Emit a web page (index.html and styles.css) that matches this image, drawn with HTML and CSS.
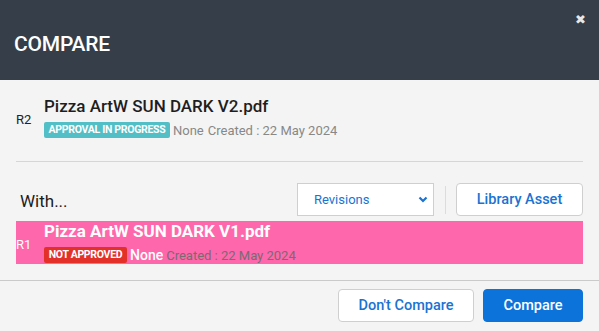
FILE: index.html
```html
<!DOCTYPE html>
<html>
<head>
<meta charset="utf-8">
<link rel="stylesheet" href="styles.css">
</head>
<body>
<div class="modal">
  <header class="modal-header">
    <h1 class="title">COMPARE</h1>
    <span class="close">&#x2716;</span>
  </header>
  <div class="modal-body">
    <div class="item">
      <div class="rev">R2</div>
      <div class="info">
        <div class="name">Pizza ArtW SUN DARK V2.pdf</div>
        <div class="meta">
          <span class="badge teal">APPROVAL IN PROGRESS</span>
          <span class="none">None</span>
          <span class="created">Created : 22 May 2024</span>
        </div>
      </div>
    </div>
    <div class="divider"></div>
    <div class="with-row">
      <div class="with">With...</div>
      <div class="controls">
        <div class="select">
          <span>Revisions</span>
          <svg width="10" height="7" viewBox="0 0 10 7"><path d="M1.5 1.5 L5 5 L8.5 1.5" fill="none" stroke="#1a73d2" stroke-width="2.2"/></svg>
        </div>
        <div class="vsep"></div>
        <button class="btn btn-outline lib">Library Asset</button>
      </div>
    </div>
    <div class="item selected">
      <div class="rev">R1</div>
      <div class="info">
        <div class="name">Pizza ArtW SUN DARK V1.pdf</div>
        <div class="meta">
          <span class="badge red">NOT APPROVED</span>
          <span class="none">None</span>
          <span class="created">Created : 22 May 2024</span>
        </div>
      </div>
    </div>
  </div>
  <footer class="modal-footer">
    <button class="btn btn-outline dont">Don't Compare</button>
    <button class="btn btn-primary cmp">Compare</button>
  </footer>
</div>
</body>
</html>
```
FILE: styles.css
```css
* { box-sizing: border-box; }
html, body { margin: 0; padding: 0; }
body {
  background: #f4f4f4;
  font-family: Roboto, "Liberation Sans", sans-serif;
  color: #1c1c1c;
  width: 599px;
  height: 331px;
  overflow: hidden;
}
.modal { display: flex; flex-direction: column; height: 331px; }
.modal-header {
  position: relative;
  height: 80px;
  background: #353e49;
  display: flex;
  align-items: center;
  padding-left: 14px;
}
.title {
  margin: 0;
  color: #fff;
  font-size: 21px;
  font-weight: 500;
  letter-spacing: -0.2px;
  margin-top: 7px;
}
.close {
  position: absolute;
  right: 13px;
  top: 12px;
  color: #e8e8e8;
  font-size: 13px;
  font-family: "DejaVu Sans", sans-serif;
  font-weight: bold;
}
.modal-body { padding: 0 16px; }
.item { display: flex; align-items: center; padding-top: 17px; }
.rev { width: 28px; font-size: 13px; color: #222; padding-top: 3px; }
.name { font-size: 17px; font-weight: 500; line-height: 18px; color: #1e1e1e; }
.meta { display: flex; align-items: center; margin-top: 7px; height: 16px; font-size: 13px; }
.badge {
  display: inline-block;
  height: 16px;
  line-height: 16px;
  padding: 0;
  border-radius: 2px;
  color: #fff;
  font-size: 10.5px;
  font-weight: 700;
  letter-spacing: -0.3px;
  margin-right: 3px;
  white-space: nowrap;
}
.teal { background: #52bec5; width: 126px; text-align: center; }
.red { background: #e3312a; width: 83px; text-align: center; }
.none { color: #888; margin-right: 4px; }
.created { color: #888; }
.divider { height: 1px; background: #d6d6d6; margin-top: 23px; }
.with-row { display: flex; justify-content: space-between; align-items: center; margin-top: 21px; }
.with { font-size: 17px; padding-left: 4px; padding-top: 3px; color: #1c1c1c; }
.controls { display: flex; align-items: center; }
.select {
  width: 137px;
  height: 33px;
  background: #fff;
  border: 1px solid #cfcfcf;
  display: flex;
  align-items: center;
  justify-content: space-between;
  padding: 0 5px 0 16px;
  color: #1a73d2;
  font-size: 13px;
}
.vsep { width: 1px; height: 28px; background: #dcdcdc; margin: 0 10px 0 11px; }
.btn {
  height: 33px;
  border-radius: 4px;
  font-family: Roboto, "Liberation Sans", sans-serif;
  font-weight: 500;
  cursor: pointer;
}
.btn-outline { background: #fff; border: 1px solid #cfcfcf; color: #1a73d2; }
.btn-primary { background: #0b73da; border: 1px solid #0b73da; color: #fff; }
.lib { width: 127px; font-size: 14.5px; }
.selected {
  margin-top: 5px;
  padding-top: 0;
  height: 43px;
  background: #ff67ac;
}
.selected .rev { color: #fff; }
.selected .name { color: #fff; font-weight: 700; }
.selected .none { color: #fff; font-weight: 500; font-size: 14px; margin-right: 3px; }
.selected .created { color: #7a6a72; }
.modal-footer {
  margin-top: 16px;
  border-top: 1px solid #cacaca;
  display: flex;
  justify-content: flex-end;
  gap: 9px;
  padding: 8px 16px 0 0;
}
.dont { width: 136px; font-size: 14.5px; }
.cmp { width: 100px; font-size: 14.5px; }
```
